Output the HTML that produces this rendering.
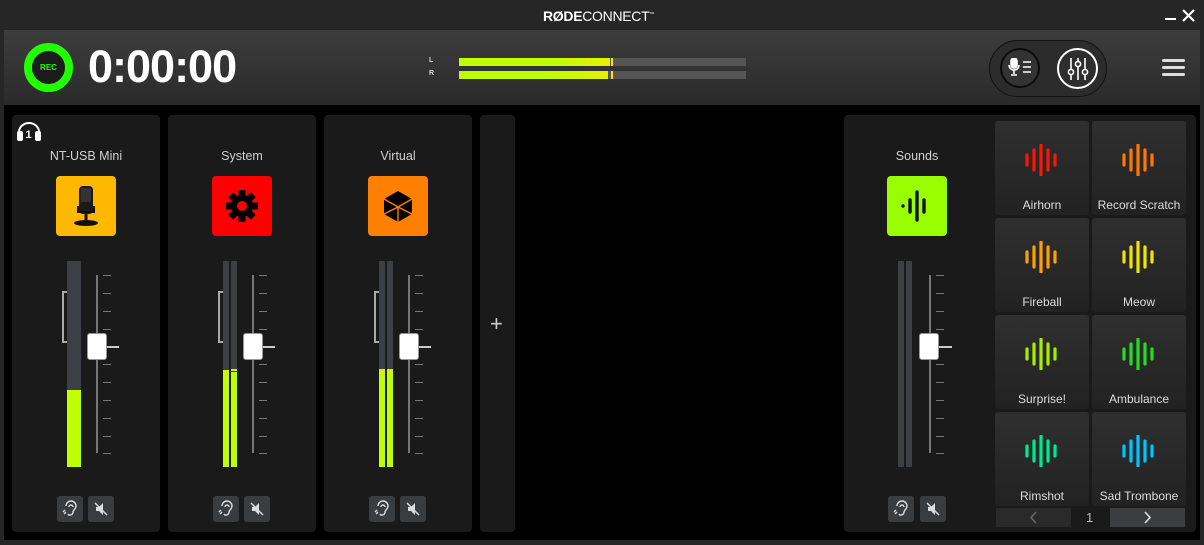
<!DOCTYPE html>
<html><head><meta charset="utf-8"><style>
*{margin:0;padding:0;box-sizing:border-box}
body{width:1204px;height:545px;background:#262626;position:relative;overflow:hidden;font-family:"Liberation Sans","DejaVu Sans",sans-serif;color:#ccc}
.a{position:absolute}
#hdr{left:4px;top:30px;width:1196px;height:75px;background:linear-gradient(#3d3d3d,#2a2a2a)}
#main{left:4px;top:105px;width:1196px;height:435px;background:#000}
.strip{position:absolute;top:115px;width:148px;height:417px;background:#1a1a1a;border-radius:4px}
.nm{position:absolute;top:34px;width:100%;text-align:center;font-size:12.5px;color:#d0d0d0}
.ib{position:absolute;left:44px;top:61px;width:60px;height:60px;border-radius:4px}
.bar{position:absolute;top:146px;height:206px;background:#3c4044}
.fill{position:absolute;bottom:0;left:0;width:100%;background:#bfff00}
.br{position:absolute;left:50px;top:176px;width:5px;height:52px;border:2px solid #aaa;border-right:none}
.fl{position:absolute;left:84px;top:160px;width:2px;height:178px;background:#777}
.tk{position:absolute;left:91px;width:8px;height:1px;background:#777}
.kn{position:absolute;left:75px;top:218px;width:20px;height:27px;background:#fff;border-radius:3px;border:1px solid #999}
.hl{position:absolute;left:94px;top:231px;width:13px;height:2px;background:#ccc}
.bt{position:absolute;top:381px;width:26px;height:26px;background:#3a3d40;border-radius:3px}
.tile{position:absolute;width:94px;height:94px;background:linear-gradient(#2f2f2f,#222);border-radius:3px}
.tile span{position:absolute;top:77px;width:100%;text-align:center;font-size:12px;color:#ddd}
.tile svg{position:absolute;left:29px;top:23px}
</style></head><body>
<div class="a" style="left:0;top:0;width:1204px;height:30px;background:#262626"></div>
<div class="a" style="left:543px;top:8px;font-size:14px;color:#fff;letter-spacing:-0.3px"><b>RØDE</b>CONNECT<sup style="font-size:5px">™</sup></div>
<div class="a" style="left:1165px;top:18px;width:11px;height:2px;background:#fff"></div>
<svg class="a" style="left:1182px;top:9px" width="13" height="13"><path d="M1 1L12 12M12 1L1 12" stroke="#fff" stroke-width="2.2"/></svg>
<div id="hdr" class="a"></div>
<div class="a" style="left:24px;top:43px;width:49px;height:49px;border-radius:50%;background:#1c1c1c;border:8px solid #22ff00;text-align:center;line-height:33px;font-size:8px;font-weight:bold;color:#22ff00">REC</div>
<div class="a" style="left:88px;top:41px;font-size:45px;font-weight:bold;color:#fff;letter-spacing:-1px">0:00:00</div>
<div class="a" style="left:429px;top:57px;font-size:7px;font-weight:bold;color:#ddd">L</div>
<div class="a" style="left:429px;top:70px;font-size:7px;font-weight:bold;color:#ddd">R</div>
<div class="a" style="left:459px;top:58px;width:287px;height:8px;background:#555"><div class="a" style="left:0;top:0;width:151px;height:8px;background:linear-gradient(90deg,#bfff00 60%,#e6f000)"></div><div class="a" style="left:152px;top:0;width:2px;height:8px;background:#ffe000"></div></div>
<div class="a" style="left:459px;top:71px;width:287px;height:8px;background:#555"><div class="a" style="left:0;top:0;width:149px;height:8px;background:linear-gradient(90deg,#bfff00 60%,#e6f000)"></div><div class="a" style="left:152px;top:0;width:2px;height:8px;background:#ffe000"></div></div>
<div class="a" style="left:989px;top:40px;width:118px;height:57px;border-radius:29px;border:1px solid #111;background:#2c2c2c"></div>
<div class="a" style="left:1000px;top:48px;width:40px;height:40px;border-radius:50%;border:2px solid #0c0c0c;background:#333"></div>
<svg class="a" style="left:1008px;top:58px" width="26" height="20" fill="none" stroke="#fff" stroke-width="1.6"><rect x="3" y="0" width="6" height="10" rx="3" fill="#fff"/><path d="M1 7a5 5 0 0 0 10 0M6 12v4M3 17h6M15 4h8M15 9h8M15 14h8"/></svg>
<div class="a" style="left:1057px;top:48px;width:41px;height:41px;border-radius:50%;border:2px solid #fff;background:#2e2e2e"></div>
<svg class="a" style="left:1066px;top:56px" width="24" height="26" fill="none" stroke="#fff" stroke-width="1.6"><path d="M5 2v22M12 2v22M19 2v22"/><circle cx="5" cy="16" r="2.6" fill="#2e2e2e"/><circle cx="12" cy="8" r="2.6" fill="#2e2e2e"/><circle cx="19" cy="16" r="2.6" fill="#2e2e2e"/></svg>
<div class="a" style="left:1162px;top:59px;width:23px;height:3px;background:#ddd;border-radius:2px;box-shadow:0 7px 0 #ddd,0 14px 0 #ddd"></div>
<div id="main" class="a"></div>

<div class="strip" style="left:12px">
<svg class="a" style="left:5px;top:6px" width="24" height="20" fill="none" stroke="#fff" stroke-width="2"><path d="M2 17V11a10 9 0 0 1 20 0v6"/><rect x="1" y="11" width="4" height="8" rx="1" fill="#fff"/><rect x="19" y="11" width="4" height="8" rx="1" fill="#fff"/><text x="8.5" y="17" font-size="11" font-weight="bold" fill="#fff" stroke="none" font-family="Liberation Sans">1</text></svg>
<div class="nm">NT-USB Mini</div>
<div class="ib" style="background:#ffb800"><svg width="60" height="60"><rect x="23" y="10" width="14" height="28" rx="4" fill="#1a1a1a"/><rect x="25" y="12" width="10" height="14" fill="#333"/><path d="M22 30v6h16v-6" stroke="#111" stroke-width="2" fill="none"/><path d="M30 38v7" stroke="#111" stroke-width="3"/><ellipse cx="30" cy="47" rx="12" ry="3" fill="#111"/></svg></div>
<div class="bar" style="left:55px;width:14px"><div class="fill" style="height:76px"></div><div class="a" style="left:0;top:129px;width:14px;height:2px;background:#bfff00"></div></div>
<div class="br"></div><div class="fl"></div>
<div class="tk" style="top:160px"></div><div class="tk" style="top:178px"></div><div class="tk" style="top:196px"></div><div class="tk" style="top:214px"></div><div class="tk" style="top:249px"></div><div class="tk" style="top:267px"></div><div class="tk" style="top:285px"></div><div class="tk" style="top:303px"></div><div class="tk" style="top:321px"></div><div class="tk" style="top:338px"></div>
<div class="hl"></div><div class="kn"></div>
<div class="bt" style="left:45px"><svg width="26" height="26" fill="none" stroke="#ddd" stroke-width="1.4"><path d="M11 18c1 2 5 1 5-2 0-2 3-3 3-6a5 5 0 0 0-10 0M12 11a2 2 0 0 1 4 0M8 14l-2 2M9 16l-2 2"/></svg></div>
<div class="bt" style="left:76px"><svg width="26" height="26"><path d="M8 11h3l4-4v12l-4-4H8z" fill="#ddd"/><path d="M7 7l12 12" stroke="#ddd" stroke-width="1.4"/></svg></div>
</div>

<div class="strip" style="left:168px">
<div class="nm">System</div>
<div class="ib" style="background:#ff0000"><svg width="60" height="60"><g transform="translate(30 30)"><g fill="#000"><circle r="11"/><rect x="-3.5" y="-16" width="7" height="32" rx="1"/><rect x="-3.5" y="-16" width="7" height="32" rx="1" transform="rotate(45)"/><rect x="-3.5" y="-16" width="7" height="32" rx="1" transform="rotate(90)"/><rect x="-3.5" y="-16" width="7" height="32" rx="1" transform="rotate(135)"/></g><circle r="5" fill="#ff0000"/></g></svg></div>
<div class="bar" style="left:55px;width:6px"><div class="fill" style="height:97px;background:linear-gradient(#d8f000,#bfff00 10%)"></div></div>
<div class="bar" style="left:63px;width:6px"><div class="fill" style="height:95px"></div><div class="a" style="left:0;top:108px;width:6px;height:2px;background:#d8f000"></div></div>
<div class="br"></div><div class="fl"></div>
<div class="tk" style="top:160px"></div><div class="tk" style="top:178px"></div><div class="tk" style="top:196px"></div><div class="tk" style="top:214px"></div><div class="tk" style="top:249px"></div><div class="tk" style="top:267px"></div><div class="tk" style="top:285px"></div><div class="tk" style="top:303px"></div><div class="tk" style="top:321px"></div><div class="tk" style="top:338px"></div>
<div class="hl"></div><div class="kn"></div>
<div class="bt" style="left:45px"><svg width="26" height="26" fill="none" stroke="#ddd" stroke-width="1.4"><path d="M11 18c1 2 5 1 5-2 0-2 3-3 3-6a5 5 0 0 0-10 0M12 11a2 2 0 0 1 4 0M8 14l-2 2M9 16l-2 2"/></svg></div>
<div class="bt" style="left:76px"><svg width="26" height="26"><path d="M8 11h3l4-4v12l-4-4H8z" fill="#ddd"/><path d="M7 7l12 12" stroke="#ddd" stroke-width="1.4"/></svg></div>
</div>

<div class="strip" style="left:324px">
<div class="nm">Virtual</div>
<div class="ib" style="background:#ff7f00"><svg width="60" height="60"><path d="M30 15l14 8v15l-14 8-14-8V23z" fill="#000"/><path d="M16 23l14 8 14-8M30 31v15M16 38l14-7 14 7" stroke="#ff7f00" stroke-width="1.4" fill="none"/></svg></div>
<div class="bar" style="left:55px;width:6px"><div class="fill" style="height:98px;background:linear-gradient(#d8f000,#bfff00 10%)"></div></div>
<div class="bar" style="left:63px;width:6px"><div class="fill" style="height:98px;background:linear-gradient(#d8f000,#bfff00 10%)"></div></div>
<div class="br"></div><div class="fl"></div>
<div class="tk" style="top:160px"></div><div class="tk" style="top:178px"></div><div class="tk" style="top:196px"></div><div class="tk" style="top:214px"></div><div class="tk" style="top:249px"></div><div class="tk" style="top:267px"></div><div class="tk" style="top:285px"></div><div class="tk" style="top:303px"></div><div class="tk" style="top:321px"></div><div class="tk" style="top:338px"></div>
<div class="hl"></div><div class="kn"></div>
<div class="bt" style="left:45px"><svg width="26" height="26" fill="none" stroke="#ddd" stroke-width="1.4"><path d="M11 18c1 2 5 1 5-2 0-2 3-3 3-6a5 5 0 0 0-10 0M12 11a2 2 0 0 1 4 0M8 14l-2 2M9 16l-2 2"/></svg></div>
<div class="bt" style="left:76px"><svg width="26" height="26"><path d="M8 11h3l4-4v12l-4-4H8z" fill="#ddd"/><path d="M7 7l12 12" stroke="#ddd" stroke-width="1.4"/></svg></div>
</div>

<div class="strip" style="left:480px;width:35px"><div class="a" style="left:10px;top:196px;font-size:22px;color:#ccc">+</div></div>

<div class="strip" style="left:844px;width:352px">
<div class="nm" style="width:146px">Sounds</div>
<div class="ib" style="left:43px;background:#99ff00"><svg width="60" height="60" stroke="#111" stroke-width="3.4" stroke-linecap="round"><path d="M16 30v0M23 24v12M30 16v28M37 24v12"/></svg></div>
<div class="bar" style="left:54px;width:6px"></div><div class="bar" style="left:62px;width:6px"></div>
<div class="fl" style="left:85px"></div>
<div class="tk" style="left:92px;top:160px"></div><div class="tk" style="left:92px;top:178px"></div><div class="tk" style="left:92px;top:196px"></div><div class="tk" style="left:92px;top:214px"></div><div class="tk" style="left:92px;top:249px"></div><div class="tk" style="left:92px;top:267px"></div><div class="tk" style="left:92px;top:285px"></div><div class="tk" style="left:92px;top:303px"></div><div class="tk" style="left:92px;top:321px"></div><div class="tk" style="left:92px;top:338px"></div>
<div class="hl" style="left:95px"></div><div class="kn" style="left:75px"></div>
<div class="bt" style="left:44px"><svg width="26" height="26" fill="none" stroke="#ddd" stroke-width="1.4"><path d="M11 18c1 2 5 1 5-2 0-2 3-3 3-6a5 5 0 0 0-10 0M12 11a2 2 0 0 1 4 0M8 14l-2 2M9 16l-2 2"/></svg></div>
<div class="bt" style="left:76px"><svg width="26" height="26"><path d="M8 11h3l4-4v12l-4-4H8z" fill="#ddd"/><path d="M7 7l12 12" stroke="#ddd" stroke-width="1.4"/></svg></div>
</div>
<svg width="0" height="0" style="position:absolute"><defs><g id="w"><path d="M3 11v10M10 6v20M17 1v30M24 6v20M31 11v10" stroke-width="3.2" stroke-linecap="round"/></g></defs></svg>
<div class="tile" style="left:995px;top:121px"><svg width="36" height="32" stroke="#ff1500"><use href="#w"/></svg><span>Airhorn</span></div>
<div class="tile" style="left:1092px;top:121px"><svg width="36" height="32" stroke="#ff7800"><use href="#w"/></svg><span>Record Scratch</span></div>
<div class="tile" style="left:995px;top:218px"><svg width="36" height="32" stroke="#ffa000"><use href="#w"/></svg><span>Fireball</span></div>
<div class="tile" style="left:1092px;top:218px"><svg width="36" height="32" stroke="#f0e400"><use href="#w"/></svg><span>Meow</span></div>
<div class="tile" style="left:995px;top:315px"><svg width="36" height="32" stroke="#a6ee00"><use href="#w"/></svg><span>Surprise!</span></div>
<div class="tile" style="left:1092px;top:315px"><svg width="36" height="32" stroke="#22dd22"><use href="#w"/></svg><span>Ambulance</span></div>
<div class="tile" style="left:995px;top:412px"><svg width="36" height="32" stroke="#00e890"><use href="#w"/></svg><span>Rimshot</span></div>
<div class="tile" style="left:1092px;top:412px"><svg width="36" height="32" stroke="#00c4ff"><use href="#w"/></svg><span>Sad Trombone</span></div>
<div class="a" style="left:996px;top:508px;width:75px;height:19px;background:#2a2a2a"><svg width="75" height="19"><path d="M40 4l-5 5.5 5 5.5" stroke="#666" stroke-width="1.6" fill="none"/></svg></div>
<div class="a" style="left:1086px;top:510px;font-size:13px;color:#bbb">1</div>
<div class="a" style="left:1110px;top:508px;width:75px;height:19px;background:#3c3d40"><svg width="75" height="19"><path d="M35 4l5 5.5-5 5.5" stroke="#ddd" stroke-width="1.6" fill="none"/></svg></div>
</body></html>
